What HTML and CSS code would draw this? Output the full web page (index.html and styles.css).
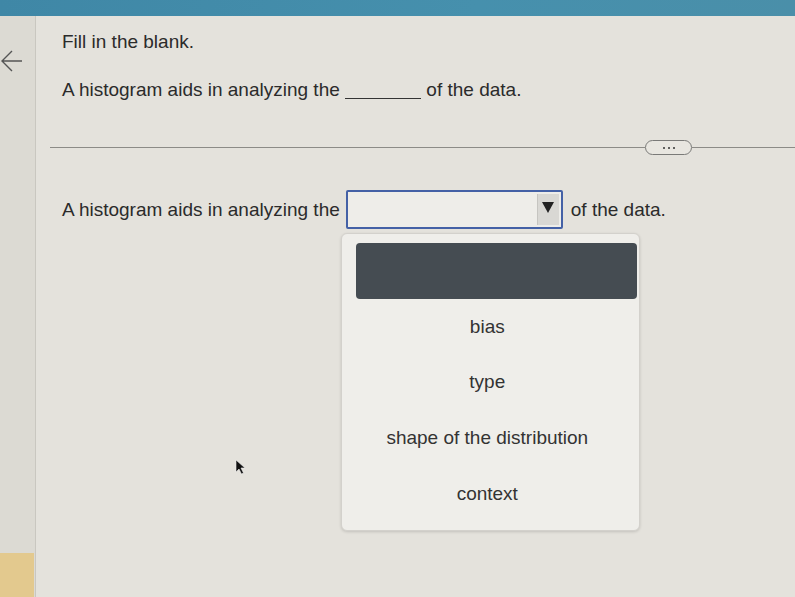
FILE: index.html
```html
<!DOCTYPE html>
<html>
<head>
<meta charset="utf-8">
<link rel="stylesheet" href="styles.css">
</head>
<body>
<div class="topbar"></div>
<div class="layout">
  <aside class="sidebar">
    <svg class="back" width="24" height="28" viewBox="0 0 24 28"><path d="M22 14 H2 M12 4 L2 14 L12 24" fill="none" stroke="#555" stroke-width="1.4"/></svg>
    <div class="spacer"></div>
    <div class="yellow"></div>
  </aside>
  <main class="content">
    <p class="instr">Fill in the blank.</p>
    <p class="question">A histogram aids in analyzing the <span class="blank"></span> of the data.</p>
    <div class="divider">
      <span class="line"></span>
      <span class="more"><i></i><i></i><i></i></span>
      <span class="line"></span>
    </div>
    <div class="answer">
      <span>A histogram aids in analyzing the</span>
      <span class="select-wrap">
        <span class="select"><span class="arrowbtn"><svg width="12" height="11" viewBox="0 0 12 11"><path d="M0 0 H12 L6 11 Z" fill="#222"/></svg></span></span>
        <span class="menu">
          <span class="item active"></span>
          <span class="item">bias</span>
          <span class="item">type</span>
          <span class="item">shape of the distribution</span>
          <span class="item">context</span>
        </span>
      </span>
      <span class="tail">of the data.</span>
    </div>
  </main>
</div>
<svg class="cursor" width="12" height="16" viewBox="0 0 12 16"><path d="M1 1 L1 13 L4 10 L6.5 15 L8.5 14 L6 9 L10 9 Z" fill="#111" stroke="#eee" stroke-width="0.6"/></svg>
</body>
</html>
```

FILE: styles.css
```css
* { box-sizing: border-box; }
html, body { margin: 0; padding: 0; }
body {
  width: 795px;
  height: 597px;
  overflow: hidden;
  background: #e4e2dc;
  font-family: "Liberation Sans", Arial, sans-serif;
  color: #2b2b2b;
  position: relative;
}
.topbar {
  height: 16px;
  background: linear-gradient(90deg, #3f87a6, #4690ad 60%, #4a8fa9);
}
.layout {
  display: flex;
  height: 581px;
}
.sidebar {
  width: 36px;
  flex: none;
  background: #dcdad3;
  border-right: 1px solid #c9c7c0;
  display: flex;
  flex-direction: column;
}
.back { margin: 31px 0 0 0; }
.spacer { flex: 1; }
.yellow {
  height: 44px;
  width: 34px;
  background: #e3c98e;
}
.content {
  flex: 1;
  padding-left: 26px;
}
p { margin: 0; }
.instr {
  font-size: 19px;
  line-height: 22px;
  margin-top: 15px;
}
.question {
  font-size: 19px;
  line-height: 22px;
  margin-top: 26px;
}
.blank {
  display: inline-block;
  width: 76px;
  border-bottom: 1.5px solid #333;
  vertical-align: -3px;
}
.divider {
  display: flex;
  align-items: center;
  margin-left: -12px;
  margin-top: 39px;
}
.line {
  flex: 1;
  height: 1px;
  background: #8c8b87;
}
.divider .line:first-child { flex: none; width: 595px; }
.more {
  width: 47px;
  height: 15px;
  border: 1px solid #7a7a78;
  border-radius: 8px;
  background: #e8e6e0;
  display: flex;
  align-items: center;
  justify-content: center;
  gap: 3px;
}
.more i {
  width: 2px;
  height: 2px;
  border-radius: 1px;
  background: #333;
}
.answer {
  display: flex;
  align-items: center;
  font-size: 19px;
  margin-top: 35px;
  gap: 6px;
}
.tail { margin-left: 2px; }
.select-wrap {
  position: relative;
  display: block;
}
.select {
  display: flex;
  justify-content: flex-end;
  align-items: center;
  width: 217px;
  height: 39px;
  border: 2px solid #4461a6;
  border-radius: 2px;
  background: #eeede9;
  padding-right: 2px;
}
.arrowbtn {
  width: 22px;
  height: 31px;
  background: #d9d8d4;
  border-left: 1px solid #c6c5c1;
  display: flex;
  align-items: flex-start;
  justify-content: center;
  padding-top: 8px;
}
.menu {
  position: absolute;
  left: -5px;
  top: 43px;
  width: 299px;
  height: 298px;
  background: #efeeea;
  border: 1px solid #d3d1cc;
  border-radius: 6px;
  box-shadow: 0 1px 3px rgba(0,0,0,0.15);
  padding: 9px 2px 8px 14px;
  display: flex;
  flex-direction: column;
}
.item {
  height: 56px;
  display: flex;
  align-items: center;
  justify-content: center;
  font-size: 19px;
  color: #333;
  padding-right: 18px;
}
.item.active {
  background: #454c52;
  border-radius: 4px;
  padding-right: 0;
}
.cursor {
  position: absolute;
  left: 235px;
  top: 459px;
}
```
